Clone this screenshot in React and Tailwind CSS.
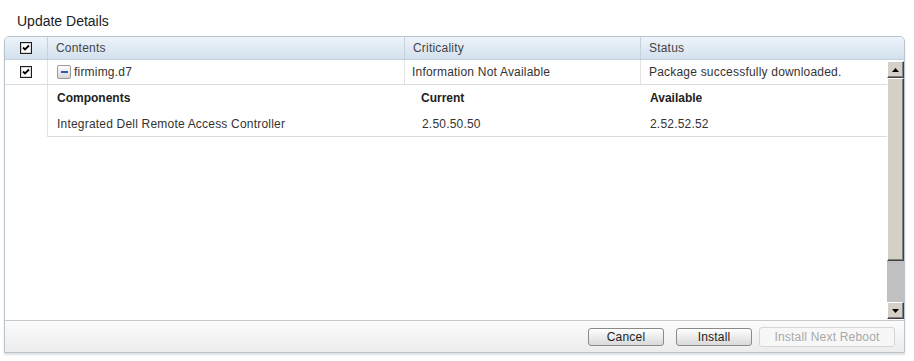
import React from 'react';

function CheckBox() {
  return (
    <svg width="12" height="12" viewBox="0 0 12 12" className="block">
      <rect x="0.5" y="0.5" width="11" height="11" fill="#fff" stroke="#1c1c1c" />
      <rect x="1.5" y="1.5" width="9" height="9" fill="none" stroke="#d8d8d8" />
      <path d="M3 5.5 L5 7.5 L9 3.5" fill="none" stroke="#000" strokeWidth="1.8" />
    </svg>
  );
}

function MinusBox() {
  return (
    <div className="w-[14px] h-[14px] rounded-[2px] border border-[#9a9a9a] bg-gradient-to-b from-[#ffffff] to-[#d6d6d6] flex items-center justify-center">
      <div className="w-[7px] h-[2px] bg-[#2a5db0]" />
    </div>
  );
}

function Arrow({ up }) {
  return (
    <svg width="7" height="4" viewBox="0 0 7 4">
      {up ? <path d="M0 4 L3.5 0 L7 4 Z" fill="#000" /> : <path d="M0 0 L3.5 4 L7 0 Z" fill="#000" />}
    </svg>
  );
}

export default function App() {
  return (
    <div className="w-[914px] h-[361px] bg-white text-[#333] font-['Liberation_Sans',Arial,sans-serif] text-[12px] tracking-[0.2px] overflow-hidden">
      {/* Title */}
      <div className="pl-[17px] pt-[11px] h-[36px] text-[14px] leading-[20px] tracking-normal text-[#222]">Update Details</div>

      {/* Panel */}
      <div className="ml-[4px] w-[901px] border border-[#b9c3cc] rounded-t-[5px] shadow-[0_2px_2px_rgba(0,0,0,0.12)]">
        {/* Header */}
        <div className="flex h-[23px] items-center bg-gradient-to-b from-[#edf3f9] to-[#d3e1ee] border-b border-[#c3cfdb] rounded-t-[5px] text-[#444]">
          <div className="w-[43px] h-full flex items-center justify-center border-r border-[#c6d0da]">
            <CheckBox />
          </div>
          <div className="w-[357px] h-full flex items-center pl-[8px] border-r border-[#c6d0da]">Contents</div>
          <div className="w-[236px] h-full flex items-center pl-[8px] border-r border-[#c6d0da]">Criticality</div>
          <div className="flex-1 h-full flex items-center pl-[8px]">Status</div>
        </div>

        {/* Body */}
        <div className="flex h-[260px]">
          <div className="flex-1">
            {/* Row 1 */}
            <div className="flex h-[25px] border-b border-[#dcdcdc]">
              <div className="w-[43px] flex items-center justify-center border-r border-[#e2e2e2]">
                <CheckBox />
              </div>
              <div className="w-[357px] flex items-center pl-[9px] gap-[3px] border-r border-[#e2e2e2]">
                <MinusBox />
                <span>firmimg.d7</span>
              </div>
              <div className="w-[236px] flex items-center pl-[7px] border-r border-[#e2e2e2]">Information Not Available</div>
              <div className="flex-1 flex items-center pl-[8px]">Package successfully downloaded.</div>
            </div>

            {/* Sub table */}
            <div className="flex">
              <div className="w-[43px] border-r border-[#e2e2e2]" />
              <div className="flex-1 border-b border-[#dcdcdc]">
                <div className="flex h-[26px] items-center font-bold text-[#222] tracking-normal">
                  <div className="w-[357px] pl-[9px]">Components</div>
                  <div className="w-[236px] pl-[16px]">Current</div>
                  <div className="flex-1 pl-[9px]">Available</div>
                </div>
                <div className="flex h-[25px] items-center">
                  <div className="w-[357px] pl-[9px]">Integrated Dell Remote Access Controller</div>
                  <div className="w-[236px] pl-[17px]">2.50.50.50</div>
                  <div className="flex-1 pl-[9px]">2.52.52.52</div>
                </div>
              </div>
            </div>
          </div>

          {/* Scrollbar */}
          <div className="w-[17px] flex flex-col pt-[1px] pb-[1px]">
            <div className="h-[17px] border border-[#404040] border-t-white border-l-white bg-[#d4d0c8] flex items-center justify-center shadow-[inset_-1px_-1px_0_#808080]">
              <Arrow up />
            </div>
            <div className="h-[183px] border border-[#404040] border-t-white border-l-white bg-[#d4d0c8] shadow-[inset_-1px_-1px_0_#808080]" />
            <div className="flex-1 bg-[#c0c0c0]" />
            <div className="h-[17px] border border-[#404040] border-t-white border-l-white bg-[#d4d0c8] flex items-center justify-center shadow-[inset_-1px_-1px_0_#808080]">
              <Arrow />
            </div>
          </div>
        </div>

        {/* Footer */}
        <div className="h-[32px] border-t border-[#c8c8c8] bg-gradient-to-b from-[#fbfbfb] to-[#ececec] flex items-center justify-end gap-[12px] pr-[9px]">
          <button className="w-[76px] h-[18px] rounded-[3px] border border-[#8a8a8a] bg-gradient-to-b from-[#ffffff] to-[#d9d9d9] text-[#222] text-[12px] leading-[16px]">Cancel</button>
          <button className="w-[76px] h-[18px] rounded-[3px] border border-[#8a8a8a] bg-gradient-to-b from-[#ffffff] to-[#d9d9d9] text-[#222] text-[12px] leading-[16px] mr-[-5px]">Install</button>
          <button className="w-[136px] h-[20px] rounded-[3px] border border-[#d6d6d6] bg-[#f7f7f7] text-[#a8a8a8] text-[12px] leading-[18px]">Install Next Reboot</button>
        </div>
      </div>
    </div>
  );
}
